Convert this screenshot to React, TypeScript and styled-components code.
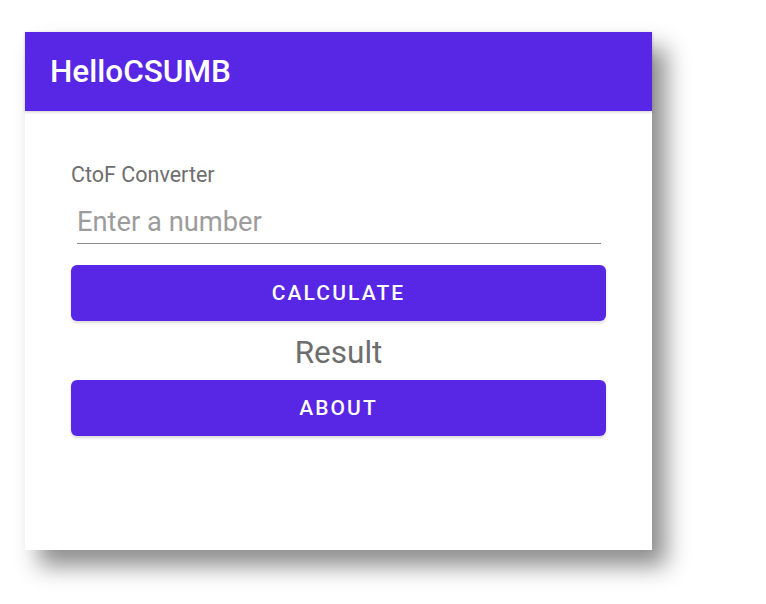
import React from 'react';
import styled, { createGlobalStyle } from 'styled-components';

const GlobalStyle = createGlobalStyle`
    html, body {
        margin: 0;
        padding: 0;
        background: #ffffff;
    }
    body {
        font-family: Roboto, "Noto Sans", sans-serif;
    }
`;

const Page = styled.div`
    width: 766px;
    height: 604px;
    padding: 32px 0 0 25px;
    box-sizing: border-box;
`;

const Window = styled.div`
    width: 627px;
    height: 518px;
    background: #ffffff;
    display: flex;
    flex-direction: column;
    box-shadow: 14px 16px 22px rgba(0, 0, 0, 0.45);
`;

const AppBar = styled.header`
    height: 79px;
    background: #5826e5;
    display: flex;
    align-items: center;
    padding-left: 25px;
    box-shadow: 0 1px 3px rgba(0, 0, 0, 0.2);
`;

const Title = styled.h1`
    margin: 0;
    color: #ffffff;
    font-size: 31.5px;
    font-weight: 500;
`;

const Content = styled.main`
    display: flex;
    flex-direction: column;
    padding: 51px 46px 0 46px;
`;

const Label = styled.div`
    color: #6e6e6e;
    font-size: 21.5px;
    line-height: 26px;
`;

const Field = styled.input`
    margin: 18px 5px 0 6px;
    border: none;
    border-bottom: 1.5px solid #8a8a8a;
    outline: none;
    padding: 0 0 5px 0;
    font-family: inherit;
    font-size: 27.3px;
    line-height: 32px;
    color: #333;
    background: transparent;

    &::placeholder {
        color: #9c9c9c;
    }
`;

const Button = styled.button<{ $top: number }>`
    margin-top: ${(p) => p.$top}px;
    height: 56px;
    border: none;
    border-radius: 6px;
    background: #5826e5;
    color: #ffffff;
    font-family: inherit;
    font-size: 21px;
    font-weight: 500;
    letter-spacing: 2.1px;
    text-transform: uppercase;
    box-shadow: 0 2px 3px rgba(0, 0, 0, 0.15);
    cursor: pointer;
`;

const Result = styled.div`
    margin-top: 14px;
    text-align: center;
    color: #6e6e6e;
    font-size: 31.5px;
    line-height: 36px;
`;

const App: React.FC = () => (
    <>
        <GlobalStyle />
        <Page>
            <Window>
                <AppBar>
                    <Title>HelloCSUMB</Title>
                </AppBar>
                <Content>
                    <Label>CtoF Converter</Label>
                    <Field placeholder="Enter a number" />
                    <Button $top={21}>Calculate</Button>
                    <Result>Result</Result>
                    <Button $top={9}>About</Button>
                </Content>
            </Window>
        </Page>
    </>
);

export default App;
